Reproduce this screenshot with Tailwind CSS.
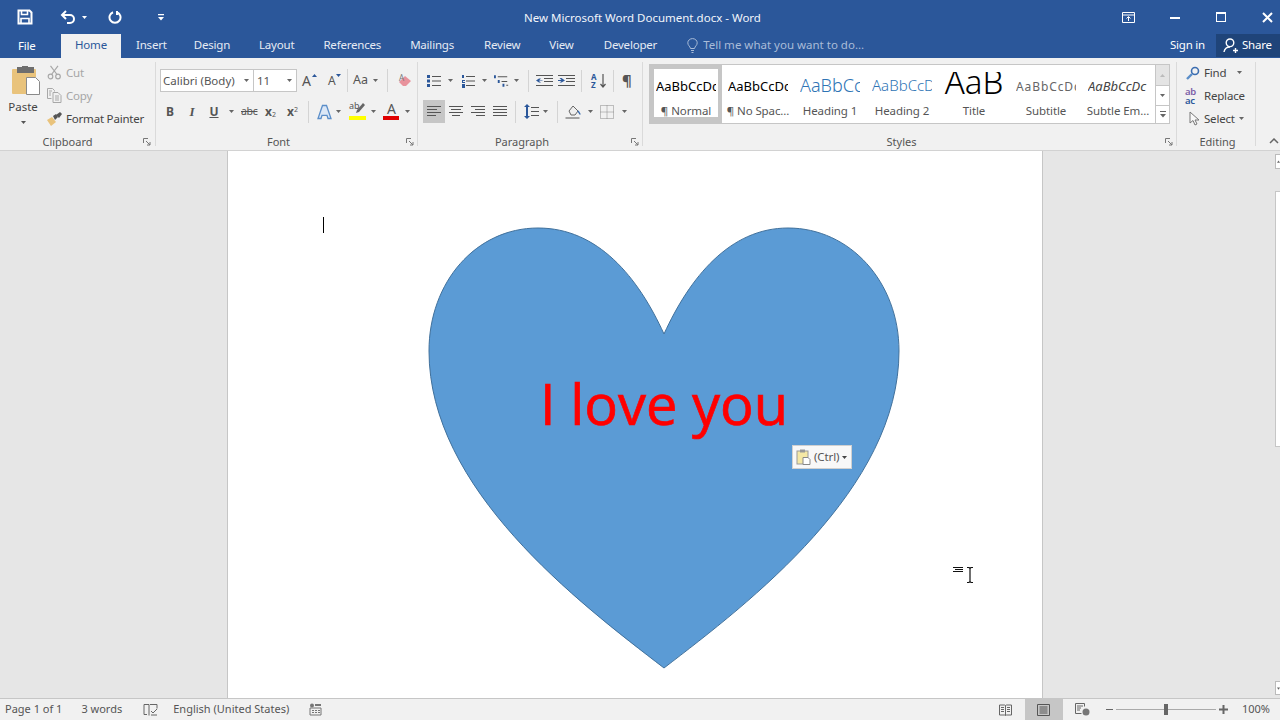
<!DOCTYPE html>
<html>
<head>
<meta charset="utf-8">
<script src="https://cdn.jsdelivr.net/npm/@tailwindcss/browser@4"></script>
<title>Word</title>
</head>
<body class="w-[1280px] h-[720px] overflow-hidden flex flex-col bg-[#e6e6e6] font-['Noto_Sans',sans-serif] text-[#444]">

<!-- Title bar -->
<header class="h-[34px] shrink-0 bg-[#2b579a] text-white relative flex items-center">
  <div class="w-[50px] flex justify-center">
    <svg width="16" height="16" viewBox="0 0 16 16" fill="none" stroke="white" stroke-width="2"><path d="M1.500 1.500h11l2 2v11h-13z"/><path d="M4.500 1.500v4h6v-4M4 14.500v-5h8v5" stroke-width="1.600"/></svg>
  </div>
  <div class="flex items-center ml-[10px] gap-[6px]">
    <svg width="16" height="14" viewBox="0 0 16 14" fill="none" stroke="white" stroke-width="2"><path d="M6 1 2 5l4 4M2 5h8a4 4 0 0 1 0 8H7"/></svg>
    <svg width="5" height="3" viewBox="0 0 5 3" fill="white"><path d="M0 0h5L2.500 3z"/></svg>
  </div>
  <div class="ml-[21px]">
    <svg width="14" height="14" viewBox="0 0 14 14" fill="none" stroke="white" stroke-width="2"><path d="M5 2.200a5.500 5.500 0 1 0 4 0M9 1v4"/></svg>
  </div>
  <div class="ml-[36px]">
    <svg width="6" height="7" viewBox="0 0 6 7" fill="white"><path d="M0 0h6v1.200H0zM0 3h6L3 6.500z"/></svg>
  </div>
  <div class="absolute left-0 right-0 top-[9px] text-center text-[11.500px] leading-[18px] text-[#f2f5fa] pl-[5px]">New Microsoft Word Document.docx - Word</div>
  <div class="ml-auto flex items-center h-full">
    <svg class="mr-[35px]" width="13" height="11" viewBox="0 0 13 11" fill="none" stroke="white"><path d="M.500.500h12v10H.500zM.500 3h12"/><path d="M6.500 9V5M4.500 6.500l2-2 2 2"/></svg>
    <div class="w-[10px] h-[2px] bg-white mr-[36px] mt-[2px]"></div>
    <div class="w-[10px] h-[10px] border border-white border-t-[2px] mr-[36px]"></div>
    <svg class="mr-[7px]" width="11" height="11" viewBox="0 0 11 11" stroke="white" stroke-width="2"><path d="M1 1l9 9M10 1l-9 9"/></svg>
  </div>
</header>

<!-- Tabs -->
<nav class="h-[24px] shrink-0 bg-[#2b579a] text-white text-[11.500px] tracking-[-.2px] flex items-stretch relative">
  <div class="w-[61px] pl-[18px] leading-[22px] pt-[1px]">File</div>
  <div class="w-[60px] bg-[#f1f1f1] text-[#2b579a] text-center leading-[22px]">Home</div>
  <div class="pl-[15px] leading-[22px] text-[#e6ebf4]">Insert</div>
  <div class="pl-[27px] leading-[22px] text-[#e6ebf4]">Design</div>
  <div class="pl-[29px] leading-[22px] text-[#e6ebf4]">Layout</div>
  <div class="pl-[29px] leading-[22px] text-[#e6ebf4]">References</div>
  <div class="pl-[29px] leading-[22px] text-[#e6ebf4]">Mailings</div>
  <div class="pl-[30px] leading-[22px] text-[#e6ebf4]">Review</div>
  <div class="pl-[29px] leading-[22px] text-[#e6ebf4]">View</div>
  <div class="pl-[30px] leading-[22px] text-[#e6ebf4]">Developer</div>
  <div class="pl-[30px] h-[22px] flex items-center gap-[5px] text-[#a9bcd8] tracking-normal">
    <svg width="11" height="15" viewBox="0 0 11 15" fill="none" stroke="#a9bcd8"><path d="M3.500 10.500C3 8 .8 7.500.8 4.800a4.700 4.200 0 0 1 9.400 0c0 2.700-2.200 3.200-2.700 5.700zM4 12.500h3M4.500 14.500h2"/></svg>
    <span>Tell me what you want to do...</span>
  </div>
  <div class="ml-auto flex items-stretch">
    <div class="leading-[22px] mr-[11px]">Sign in</div>
    <div class="w-[64px] bg-[#1f4479] flex items-center pl-[7px] gap-[4px] mb-[1px]">
      <svg width="15" height="15" viewBox="0 0 15 15" fill="none" stroke="white" stroke-width="1.400"><circle cx="7" cy="4.800" r="3.800"/><path d="M1 14c.5-3 2.500-5 6-5M10 12.500h5M12.500 10v5"/></svg>
      <span class="-mt-[2px]">Share</span>
    </div>
  </div>
</nav>

<!-- Ribbon -->
<section class="h-[93px] shrink-0 bg-[#f1f1f1] border-b border-[#d2d2d2] flex text-[11.500px] relative">

  <!-- Clipboard -->
  <div class="w-[156px] shrink-0 relative border-r border-[#dadada] my-[4px]">
    <div class="flex h-[78px]">
      <div class="w-[45px] flex flex-col items-center pt-[4px] pl-[1px]">
        <svg class="ml-[5px]" width="30" height="30" viewBox="0 0 30 30"><rect x="1" y="3" width="24" height="25" rx="1" fill="#e9c37c"/><rect x="6" y="1" width="17" height="6" fill="#6e6e6e"/><rect x="11" y="0" width="6" height="3" fill="#6e6e6e"/><path d="M15.500 11.500h9l4 4v13h-13z" fill="#fff" stroke="#8a8a8a"/></svg>
        <div class="leading-[16px] mt-[3px] text-[11.500px] text-[#444]">Paste</div>
        <svg class="mt-[6px]" width="5" height="3" viewBox="0 0 5 3" fill="#555"><path d="M0 0h5L2.500 3z"/></svg>
      </div>
      <div class="flex flex-col -mt-[1px] pl-[2px] tracking-[-.2px]">
        <div class="h-[23px] flex items-center gap-[4px] text-[#a6a6a6]">
          <svg width="15" height="15" viewBox="0 0 15 15" fill="none" stroke="#a8a8a8" stroke-width="1.200"><circle cx="3.500" cy="11.500" r="2.300"/><circle cx="11" cy="11.500" r="2.300"/><path d="M4.500 9.500 11 .8M10 9.500 3.500.8"/></svg>
          <span>Cut</span>
        </div>
        <div class="h-[23px] flex items-center gap-[4px] text-[#a6a6a6]">
          <svg width="15" height="15" viewBox="0 0 15 15" fill="none" stroke="#a8a8a8"><path d="M.5.500h5l2 2v1M.5.500v10h4M6 4.500h5l3 3v7H6zM2 3h3M2 5h2M2 7h2M8 8h4M8 10h4M8 12h4"/></svg>
          <span>Copy</span>
        </div>
        <div class="h-[23px] flex items-center gap-[4px] text-[#444]">
          <svg width="15" height="14" viewBox="0 0 15 14"><path d="M0 8l5-3 4 5-5 4z" fill="#e9c37c"/><path d="M6 4l3-2 2 3-3 3z" fill="#555"/><path d="M9 3l4-3 2 2-3 4z" fill="#555"/></svg>
          <span>Format Painter</span>
        </div>
      </div>
    </div>
    <div class="absolute left-0 right-[20px] top-[73px] text-center text-[#555] text-[11px] leading-[14px]">Clipboard</div>
    <svg class="absolute right-[4px] top-[76px]" width="8" height="8" viewBox="0 0 8 8" fill="none" stroke="#777"><path d="M.5 5V.500H5"/><path d="M3 3l4 4M7 4v3H4"/></svg>
  </div>

  <!-- Font -->
  <div class="w-[262px] shrink-0 relative border-r border-[#dadada] my-[4px]">
    <div class="flex items-center pl-[4px] pt-[7px] h-[30px]">
      <div class="w-[94px] h-[23px] bg-white border border-[#c6c6c6] flex items-center pl-[2px] text-[#555]">
        <span>Calibri (Body)</span>
        <svg class="ml-auto mr-[4px]" width="5" height="3" viewBox="0 0 5 3" fill="#666"><path d="M0 0h5L2.500 3z"/></svg>
      </div>
      <div class="w-[43px] h-[23px] bg-white border border-l-0 border-[#c6c6c6] flex items-center pl-[3px] text-[#555]">
        <span>11</span>
        <svg class="ml-auto mr-[4px]" width="5" height="3" viewBox="0 0 5 3" fill="#666"><path d="M0 0h5L2.500 3z"/></svg>
      </div>
      <span class="ml-[5px] w-[10px] text-[14px] text-[#555] leading-none">A</span><svg class="-mt-[10px]" width="5" height="3" viewBox="0 0 5 3" fill="#2b579a"><path d="M0 3h5L2.500 0z"/></svg>
      <span class="ml-[11px] w-[8px] text-[12px] text-[#555] leading-none mt-[1px]">A</span><svg class="-mt-[10px]" width="5" height="3" viewBox="0 0 5 3" fill="#2b579a"><path d="M0 0h5L2.500 3z"/></svg>
      <div class="w-px h-[23px] bg-[#d4d4d4] ml-[6px]"></div>
      <span class="ml-[5px] w-[16px] text-[12.500px] text-[#555]">Aa</span>
      <svg class="ml-[4px]" width="5" height="3" viewBox="0 0 5 3" fill="#666"><path d="M0 0h5L2.500 3z"/></svg>
      <div class="w-px h-[23px] bg-[#d4d4d4] ml-[9px]"></div>
      <svg class="ml-[9px]" width="15" height="15" viewBox="0 0 15 15"><path d="M6 13 2 9l6-6 6 5-5 5z" fill="#e8929c"/><text x="2" y="8" font-size="8" fill="#777" font-family="Noto Sans">A</text></svg>
    </div>
    <div class="flex items-center pl-[8px] h-[31px] mt-[4px] text-[#555]">
      <span class="w-[12px] text-center font-bold text-[12px]">B</span>
      <span class="ml-[10px] w-[12px] text-center italic text-[13px] font-['Liberation_Serif',serif] font-bold">I</span>
      <span class="ml-[10px] w-[12px] text-center underline font-bold text-[12px]">U</span>
      <svg class="ml-[9px]" width="5" height="3" viewBox="0 0 5 3" fill="#666"><path d="M0 0h5L2.500 3z"/></svg>
      <span class="ml-[7px] w-[17px] text-[10.500px] tracking-[-.3px] line-through">abc</span>
      <span class="ml-[7px] w-[14px] font-bold text-[12px]">x<sub class="text-[7px] font-normal">2</sub></span>
      <span class="ml-[8px] w-[14px] font-bold text-[12px]">x<sup class="text-[7px] font-normal">2</sup></span>
      <div class="w-px h-[22px] bg-[#d4d4d4] ml-[7px]"></div>
      <svg class="ml-[8px]" width="15" height="16" viewBox="0 0 15 16"><path d="M5.500 1.500h4l4.500 13h-3l-1-3.200H5l-1 3.200H1z" fill="#dbe7f6" stroke="#5b8ec9" stroke-width="1.300"/></svg>
      <svg class="ml-[4px]" width="5" height="3" viewBox="0 0 5 3" fill="#666"><path d="M0 0h5L2.500 3z"/></svg>
      <div class="ml-[8px] w-[17px] h-[20px] relative">
        <span class="absolute left-0 -top-[2px] text-[9px] leading-[12px] text-[#555]">ab</span>
        <svg class="absolute left-[5px] top-0" width="12" height="13" viewBox="0 0 12 13"><path d="M9 1l2 2-6 7-3 1 1-3z" fill="#666"/></svg>
        <div class="absolute left-0 bottom-[2px] w-[17px] h-[4px] bg-[#ffff00]"></div>
      </div>
      <svg class="ml-[5px]" width="5" height="3" viewBox="0 0 5 3" fill="#666"><path d="M0 0h5L2.500 3z"/></svg>
      <div class="ml-[7px] w-[17px] h-[20px] relative text-center">
        <span class="absolute left-0 right-0 -top-[3px] text-[14px] leading-[19px] text-[#555]">A</span>
        <div class="absolute left-0 bottom-[2px] w-[16px] h-[4px] bg-[#e00000]"></div>
      </div>
      <svg class="ml-[5px]" width="5" height="3" viewBox="0 0 5 3" fill="#666"><path d="M0 0h5L2.500 3z"/></svg>
    </div>
    <div class="absolute left-0 right-[16px] top-[73px] text-center text-[#555] text-[11px] leading-[14px]">Font</div>
    <svg class="absolute right-[3px] top-[76px]" width="8" height="8" viewBox="0 0 8 8" fill="none" stroke="#777"><path d="M.5 5V.500H5"/><path d="M3 3l4 4M7 4v3H4"/></svg>
  </div>

  <!-- Paragraph -->
  <div class="w-[225px] shrink-0 relative border-r border-[#dadada] my-[4px]">
    <div class="flex items-center h-[30px] pt-[7px] pl-[9px]">
      <svg width="14" height="13" viewBox="0 0 14 13" fill="#555"><rect x="0" y="1" width="3" height="3" fill="#2b579a"/><rect x="0" y="5.500" width="3" height="3" fill="#2b579a"/><rect x="0" y="10" width="3" height="3" fill="#2b579a"/><path d="M5 2h9v1H5zM5 6.500h9v1H5zM5 11h9v1H5z"/></svg>
      <svg class="ml-[7px]" width="5" height="3" viewBox="0 0 5 3" fill="#666"><path d="M0 0h5L2.500 3z"/></svg>
      <svg class="ml-[8px]" width="14" height="14" viewBox="0 0 14 14" fill="#555"><path d="M1 1h2v3H1zM1 6h3v1H2v1h2v1H1zM1 10h3v4H1z" fill="#2b579a"/><path d="M5 2h9v1H5zM5 6.500h9v1H5zM5 11h9v1H5z"/></svg>
      <svg class="ml-[7px]" width="5" height="3" viewBox="0 0 5 3" fill="#666"><path d="M0 0h5L2.500 3z"/></svg>
      <svg class="ml-[7px]" width="17" height="14" viewBox="0 0 18 14" fill="#555"><path d="M0 1h2v3H0zM4 6h2v3H4zM9 10h2v3H9z" fill="#2b579a"/><path d="M4 2h10v1H4zM8 7h6v1H8zM13 11h2v1h-2z"/></svg>
      <svg class="ml-[3px]" width="5" height="3" viewBox="0 0 5 3" fill="#666"><path d="M0 0h5L2.500 3z"/></svg>
      <div class="w-px h-[22px] bg-[#d4d4d4] ml-[9px]"></div>
      <svg class="ml-[7px]" width="17" height="11" viewBox="0 0 17 11" fill="#555"><path d="M0 0h17v1H0zM8 3h9v1H8zM8 6h9v1H8zM0 10h17v1H0z"/><path d="M6.500 5.500H3l2-2H3L0 5.500l3 2h2l-2-1.500h3.500z" fill="#2b579a"/></svg>
      <svg class="ml-[5px]" width="17" height="11" viewBox="0 0 17 11" fill="#555"><path d="M0 0h17v1H0zM8 3h9v1H8zM8 6h9v1H8zM0 10h17v1H0z"/><path d="M0 5h3.500l-2-2h2L7 5.500l-3.500 2h-2l2-1.500H0z" fill="#2b579a"/></svg>
      <div class="w-px h-[22px] bg-[#d4d4d4] ml-[6px]"></div>
      <div class="ml-[9px] w-[8px] text-[8px] leading-[8px] font-bold text-[#2b579a]">A<br>Z</div>
      <svg class="ml-[1px]" width="6" height="14" viewBox="0 0 6 14" fill="none" stroke="#555" stroke-width="1.200"><path d="M3 0v13M.5 10 3 13l2.500-3"/></svg>
      <div class="w-px h-[22px] bg-[#d4d4d4] ml-[7px]"></div>
      <span class="ml-[8px] text-[15px] leading-none text-[#555] font-bold">¶</span>
    </div>
    <div class="flex items-center h-[31px] mt-[4px] pl-[5px]">
      <div class="w-[22px] h-[23px] bg-[#c6c6c6] flex items-center justify-center">
        <svg width="14" height="11" viewBox="0 0 14 11" fill="#555"><path d="M0 0h14v1H0zM0 3h10v1H0zM0 6h14v1H0zM0 9h9v1H0z"/></svg>
      </div>
      <svg class="ml-[4px]" width="14" height="11" viewBox="0 0 14 11" fill="#555"><path d="M0 0h14v1H0zM2 3h10v1H2zM0 6h14v1H0zM3 9h8v1H3z"/></svg>
      <svg class="ml-[8px]" width="14" height="11" viewBox="0 0 14 11" fill="#555"><path d="M0 0h14v1H0zM4 3h10v1H4zM0 6h14v1H0zM5 9h9v1H5z"/></svg>
      <svg class="ml-[8px]" width="14" height="11" viewBox="0 0 14 11" fill="#555"><path d="M0 0h14v1H0zM0 3h14v1H0zM0 6h14v1H0zM0 9h14v1H0z"/></svg>
      <div class="w-px h-[22px] bg-[#d4d4d4] ml-[8px]"></div>
      <svg class="ml-[8px]" width="15" height="15" viewBox="0 0 15 15" fill="#555"><path d="M3 0 6 3H4v9h2l-3 3-3-3h2V3H0z" fill="#2b579a"/><path d="M7 3h8v1H7zM7 7h8v1H7zM7 11h8v1H7z"/></svg>
      <svg class="ml-[4px]" width="5" height="3" viewBox="0 0 5 3" fill="#666"><path d="M0 0h5L2.500 3z"/></svg>
      <div class="w-px h-[22px] bg-[#d4d4d4] ml-[9px]"></div>
      <svg class="ml-[7px]" width="17" height="16" viewBox="0 0 17 16" fill="none" stroke="#666"><path d="M4 7l4-5 5 5-3 4H6z" fill="#eee"/><path d="M13 7c1 1.500 2 2.500 2 3.500" stroke="#3b6db0" stroke-width="1.500"/><path d="M.5 14h14" stroke="#777" stroke-width="1.300"/></svg>
      <svg class="ml-[6px]" width="5" height="3" viewBox="0 0 5 3" fill="#666"><path d="M0 0h5L2.500 3z"/></svg>
      <svg class="ml-[7px]" width="14" height="14" viewBox="0 0 14 14" fill="none" stroke="#888" stroke-dasharray="1 1"><path d="M.5.500h13v13H.5zM7 .500v13M.5 7h13"/></svg>
      <svg class="ml-[8px]" width="5" height="3" viewBox="0 0 5 3" fill="#666"><path d="M0 0h5L2.500 3z"/></svg>
    </div>
    <div class="absolute left-0 right-[16px] top-[73px] text-center text-[#555] text-[11px] leading-[14px]">Paragraph</div>
    <svg class="absolute right-[3px] top-[76px]" width="8" height="8" viewBox="0 0 8 8" fill="none" stroke="#777"><path d="M.5 5V.500H5"/><path d="M3 3l4 4M7 4v3H4"/></svg>
  </div>

  <!-- Styles -->
  <div class="w-[534px] shrink-0 relative border-r border-[#dadada] my-[4px]">
    <div class="absolute left-[6px] top-[2px] w-[521px] h-[60px] bg-white border border-[#c6c6c6] flex text-[11.500px] tracking-[-.1px]">
      <div class="w-[72px] h-[58px] border-[4px] border-b-[6px] border-[#c6c6c6] shrink-0 flex flex-col items-center pt-[2px]">
        <div class="h-[25px] shrink-0 w-[60px] overflow-hidden text-[13px] tracking-normal text-black leading-[31px] whitespace-nowrap">AaBbCcDc</div>
        <div class="mt-[7px] text-[#555] leading-[16px] whitespace-nowrap">¶ Normal</div>
      </div>
      <div class="w-[72px] shrink-0 flex flex-col items-center pt-[6px]">
        <div class="h-[25px] shrink-0 w-[60px] overflow-hidden text-[13px] tracking-normal text-black leading-[31px] whitespace-nowrap">AaBbCcDc</div>
        <div class="mt-[7px] text-[#555] leading-[16px] whitespace-nowrap">¶ No Spac...</div>
      </div>
      <div class="w-[72px] shrink-0 flex flex-col items-center pt-[6px]">
        <div class="h-[25px] shrink-0 w-[60px] overflow-hidden text-[18px] tracking-normal font-light text-[#2e74b5] leading-[29px] whitespace-nowrap">AaBbCc</div>
        <div class="mt-[7px] text-[#555] leading-[16px] whitespace-nowrap">Heading 1</div>
      </div>
      <div class="w-[72px] shrink-0 flex flex-col items-center pt-[6px]">
        <div class="h-[25px] shrink-0 w-[60px] overflow-hidden text-[15px] tracking-normal font-light text-[#2e74b5] leading-[29px] whitespace-nowrap">AaBbCcD</div>
        <div class="mt-[7px] text-[#555] leading-[16px] whitespace-nowrap">Heading 2</div>
      </div>
      <div class="w-[72px] shrink-0 flex flex-col items-center pt-[7px]">
        <div class="h-[24px] shrink-0 w-[60px] overflow-hidden text-[33px] tracking-normal font-light text-black leading-[19px] whitespace-nowrap text-center">AaB</div>
        <div class="mt-[7px] text-[#555] leading-[16px] whitespace-nowrap">Title</div>
      </div>
      <div class="w-[72px] shrink-0 flex flex-col items-center pt-[6px]">
        <div class="h-[25px] shrink-0 w-[60px] overflow-hidden text-[12px] text-[#666] tracking-[.9px] leading-[31px] whitespace-nowrap">AaBbCcDc</div>
        <div class="mt-[7px] text-[#555] leading-[16px] whitespace-nowrap">Subtitle</div>
      </div>
      <div class="w-[60px] ml-[6px] shrink-0 flex flex-col items-center pt-[6px]">
        <div class="h-[25px] shrink-0 w-[60px] overflow-hidden text-[13px] tracking-normal italic text-[#444] leading-[31px] whitespace-nowrap">AaBbCcDc</div>
        <div class="mt-[7px] text-[#555] leading-[16px] whitespace-nowrap">Subtle Em...</div>
      </div>
      <div class="absolute right-[-1px] top-[-1px] w-[15px] h-[60px] flex flex-col border border-[#c6c6c6] bg-white">
        <div class="h-[21px] bg-[#e4e4e4] border-b border-[#c6c6c6] flex items-center justify-center"><svg width="5" height="3" viewBox="0 0 5 3" fill="#bbb"><path d="M0 3h5L2.500 0z"/></svg></div>
        <div class="h-[20px] border-b border-[#c6c6c6] flex items-center justify-center"><svg width="5" height="3" viewBox="0 0 5 3" fill="#666"><path d="M0 0h5L2.500 3z"/></svg></div>
        <div class="flex-1 flex items-center justify-center"><svg width="6" height="7" viewBox="0 0 6 7" fill="#666"><path d="M0 0h6v1H0zM0 3h6L3 6.500z"/></svg></div>
      </div>
    </div>
    <div class="absolute left-0 right-[16px] top-[73px] text-center text-[#555] text-[11px] leading-[14px]">Styles</div>
    <svg class="absolute right-[3px] top-[76px]" width="8" height="8" viewBox="0 0 8 8" fill="none" stroke="#777"><path d="M.5 5V.500H5"/><path d="M3 3l4 4M7 4v3H4"/></svg>
  </div>

  <!-- Editing -->
  <div class="w-[79px] shrink-0 relative border-r border-[#dadada] my-[4px]">
    <div class="flex flex-col -mt-[1px] pl-[9px] tracking-[-.2px]">
      <div class="h-[23px] flex items-center gap-[4px]">
        <svg width="14" height="14" viewBox="0 0 14 14" fill="none"><circle cx="9" cy="5" r="3.500" stroke="#3b6db0" stroke-width="1.600"/><path d="M6 8l-5 5" stroke="#5b8ec9" stroke-width="2.400"/></svg>
        <span>Find</span>
        <svg class="ml-[7px]" width="5" height="3" viewBox="0 0 5 3" fill="#666"><path d="M0 0h5L2.500 3z"/></svg>
      </div>
      <div class="h-[23px] flex items-center gap-[3px] -ml-[1px]">
        <div class="w-[16px] text-[9.500px] leading-[9px] font-semibold"><span class="text-[#7b5ea7]">ab</span><br><span class="text-[#2b579a]">ac</span></div>
        <span>Replace</span>
      </div>
      <div class="h-[23px] flex items-center gap-[3px] pl-[3px]">
        <svg width="11" height="15" viewBox="0 0 11 15" fill="#f8f8f8" stroke="#777"><path d="M1 1v11l3-2.500 2 4.500 2-1-2-4h4z"/></svg>
        <span class="ml-[1px]">Select</span>
        <svg class="ml-[1px]" width="5" height="3" viewBox="0 0 5 3" fill="#666"><path d="M0 0h5L2.500 3z"/></svg>
      </div>
    </div>
    <div class="absolute left-[3px] right-0 top-[73px] text-center text-[#555] text-[11px] leading-[14px]">Editing</div>
  </div>
  <svg class="absolute right-[1px] bottom-[6px]" width="10" height="6" viewBox="0 0 10 6" fill="none" stroke="#666" stroke-width="1.500"><path d="M1 5l4-4 4 4"/></svg>
</section>

<!-- Document area -->
<main class="flex-1 relative overflow-hidden bg-[#e6e6e6] flex justify-start">
  <div class="ml-[227px] w-[816px] h-full bg-white border-x border-[#c6c6c6] relative shrink-0">
    <div class="absolute left-[95px] top-[66px] w-px h-[16px] bg-black"></div>
    <svg class="absolute left-[200px] top-[76px]" width="472" height="442" viewBox="0 0 472 442">
      <path d="M236 441C150 375 1 262 1 124C1 55 48 1 110 1C170 1 210 50 236 107C262 50 302 1 360 1C422 1 471 55 471 124C471 262 322 375 236 441Z" fill="#5b9bd5" stroke="#41719c"/>
    </svg>
    <div class="absolute left-[200px] w-[472px] top-[214px] text-center text-[#ff0000] text-[56px] leading-[76px] font-['Open_Sans',sans-serif] [-webkit-text-stroke:0.7px_#ff0000]">I love you</div>
    <div class="absolute left-[564px] top-[294px] w-[60px] h-[24px] bg-[#f8f8f8] border border-[#d0d0d0] flex items-center pl-[3px] gap-[3px] text-[11.500px] tracking-[-.1px] text-[#555]">
      <svg width="15" height="16" viewBox="0 0 15 16"><rect x="1" y="2" width="11" height="13" fill="#f5e8a5" stroke="#9a9a9a"/><rect x="4" y="0.500" width="5" height="3" fill="#999"/><path d="M7 8.500h5l2 2v5H7z" fill="#fff" stroke="#888"/></svg>
      <span>(Ctrl)</span>
      <svg width="5" height="3" viewBox="0 0 5 3" fill="#444"><path d="M0 0h5L2.500 3z"/></svg>
    </div>
    <svg class="absolute left-[724px] top-[415px]" width="22" height="18" viewBox="0 0 22 18" fill="none" stroke="#111" stroke-width="1.200"><path d="M1 1.500h10M3 3.500h8M1 5.500h10"/><path d="M15 1.500h2l1 1 1-1h2M18 2.500v13M15 16.500h2l1-1 1 1h2"/></svg>
  </div>
  <!-- Scrollbar -->
  <div class="absolute right-0 top-0 bottom-0 w-[5px] flex flex-col">
    <div class="h-[15px] mt-[3px] bg-white border border-r-0 border-[#bbb] flex items-center pl-[1px]"><svg width="4" height="3" viewBox="0 0 4 3" fill="#666"><path d="M0 3h4L2 0z"/></svg></div>
    <div class="h-[22px]"></div>
    <div class="h-[256px] bg-white border border-r-0 border-[#c6c6c6]"></div>
    <div class="flex-1"></div>
    <div class="h-[14px] mb-[3px] bg-white border border-r-0 border-[#bbb] flex items-center pl-[1px]"><svg width="4" height="3" viewBox="0 0 4 3" fill="#666"><path d="M0 0h4L2 3z"/></svg></div>
  </div>
</main>

<!-- Status bar -->
<footer class="h-[22px] shrink-0 bg-[#f1f1f1] border-t border-[#c6c6c6] flex items-center text-[11px] text-[#555] relative">
  <span class="ml-[5px]">Page 1 of 1</span>
  <span class="ml-[19px]">3 words</span>
  <svg class="ml-[21px]" width="15" height="14" viewBox="0 0 15 14" fill="none" stroke="#666"><path d="M6 1.500H1v10h3M6 1.500v11M7 1.500h7v4M8 8l2 2 4-4M8 12h6"/></svg>
  <span class="ml-[15px]">English (United States)</span>
  <svg class="ml-[20px]" width="13" height="13" viewBox="0 0 13 13" fill="#777"><circle cx="3" cy="2.500" r="2"/><path d="M6 1h6v2H6z"/><path d="M1 5h11v7H1z" fill="none" stroke="#777"/><path d="M3 7h2v1H3zM6 7h2v1H6zM9 7h2v1H9zM3 9h2v1H3zM6 9h2v1H6zM9 9h2v1H9z"/></svg>
  <div class="ml-auto flex items-center h-full">
    <svg class="mr-[13px]" width="13" height="12" viewBox="0 0 13 12" fill="none" stroke="#666"><path d="M.5 1h5l1 .500 1-.500h5v10h-5l-1 .500-1-.500h-5zM6.500 1.500v10M2 3.500h3M2 5.500h3M2 7.500h3M8 3.500h3M8 5.500h3M8 7.500h3"/></svg>
    <div class="w-[38px] h-full bg-[#c6c6c6] flex items-center justify-center">
      <svg width="13" height="12" viewBox="0 0 13 12" fill="none" stroke="#555"><path d="M.5.500h12v11H.5zM2.500 3h8M2.500 5h8M2.500 7h8M2.500 9h8"/></svg>
    </div>
    <svg class="ml-[12px]" width="15" height="13" viewBox="0 0 15 13" fill="none" stroke="#666"><path d="M.5.500h9v3M.5.500v10h6M2 3h6M2 5h4M2 7h3"/><circle cx="11" cy="9" r="3.500" fill="#777" stroke="none"/></svg>
    <div class="ml-[16px] w-[7px] h-[1.500px] bg-[#666]"></div>
    <div class="ml-[3px] w-[100px] h-px bg-[#aaa] relative">
      <div class="absolute left-[48px] -top-[5px] w-[4px] h-[11px] bg-[#666]"></div>
    </div>
    <svg class="ml-[3px]" width="9" height="9" viewBox="0 0 9 9" fill="#666"><path d="M3.500 0h2v3.500H9v2H5.500V9h-2V5.500H0v-2h3.500z"/></svg>
    <span class="ml-[14px] mr-[10px]">100%</span>
  </div>
</footer>
</body>
</html>
